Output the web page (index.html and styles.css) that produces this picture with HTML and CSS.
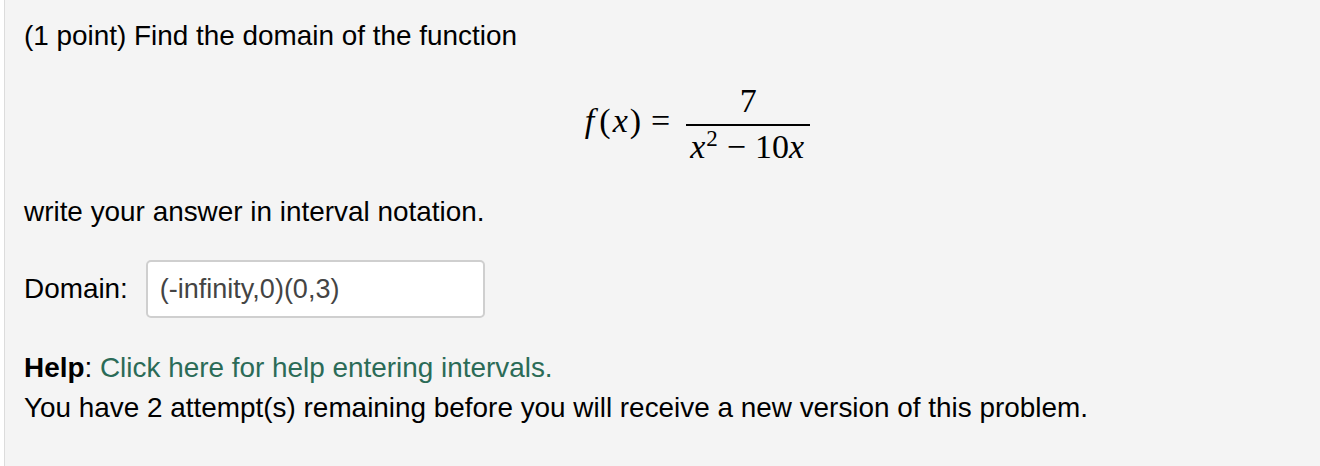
FILE: index.html
```html
<!DOCTYPE html>
<html lang="en">
<head>
  <meta charset="UTF-8">
  <title>Problem</title>
  <link rel="stylesheet" href="styles.css">
</head>
<body>
  <div class="problema">
    <p class="enunciado">(1 point) Find the domain of the function</p>

    <div class="formula">
      <span class="lhs"><i class="f">f</i>(<i>x</i>)<span class="igual">=</span></span>
      <span class="fraccion">
        <span class="num">7</span>
        <span class="den"><i>x</i><sup>2</sup><span class="menos">&minus;</span>10<i>x</i></span>
      </span>
    </div>

    <p class="enunciado">write your answer in interval notation.</p>

    <div class="respuesta">
      <label for="dominio">Domain:</label>
      <input type="text" id="dominio" value="(-infinity,0)(0,3)">
    </div>

    <div class="ayuda">
      <p><b>Help</b>: <a href="#">Click here for help entering intervals.</a></p>
      <p>You have 2 attempt(s) remaining before you will receive a new version of this problem.</p>
    </div>
  </div>
</body>
</html>
```

FILE: styles.css
```css
* {
  box-sizing: border-box;
}
body {
  margin: 0;
  background: #ffffff;
  font-family: "Liberation Sans", Arial, sans-serif;
  color: #000;
}
.problema {
  margin-left: 4px;
  border-left: 1px solid #dcdcdc;
  background: #f4f4f4;
  min-height: 466px;
  padding: 19px 19px 0;
  font-size: 27.9px;
}
.enunciado {
  margin: 0;
  line-height: 34px;
}

/* formula */
.formula {
  display: flex;
  justify-content: center;
  align-items: center;
  padding: 31px 0 31px 66px;
  font-family: "Liberation Serif", "Times New Roman", serif;
  font-size: 34px;
  line-height: 34px;
}
.formula i {
  font-style: italic;
}
.lhs {
  margin-bottom: 6px;
  margin-right: 14px;
  letter-spacing: 2px;
}
.lhs .f {
  margin-left: 4px;
  margin-right: 3px;
}
.igual {
  margin-left: 8px;
}
.fraccion {
  display: inline-flex;
  flex-direction: column;
  align-items: center;
}
.fraccion .num {
  padding: 0 4px 6px;
}
.fraccion .den {
  border-top: 2px solid #000;
  padding: 4px 6px 0 4px;
}
.fraccion sup {
  font-size: 23px;
  vertical-align: 12px;
  line-height: 0;
  margin-left: 1px;
}
.menos {
  margin: 0 9px;
}

/* respuesta */
.respuesta {
  display: flex;
  align-items: center;
  gap: 18px;
  margin-top: 31px;
}
.respuesta input {
  width: 339px;
  height: 58px;
  border: 2px solid #cfcfcf;
  border-radius: 5px;
  background: #fff;
  padding: 0 12px;
  font-family: "Liberation Sans", Arial, sans-serif;
  font-size: 27px;
  color: #444;
}

.ayuda {
  margin-top: 30px;
}
.ayuda p {
  margin: 0;
  line-height: 40px;
}
.ayuda a {
  color: #2b6b57;
  text-decoration: none;
}
```
